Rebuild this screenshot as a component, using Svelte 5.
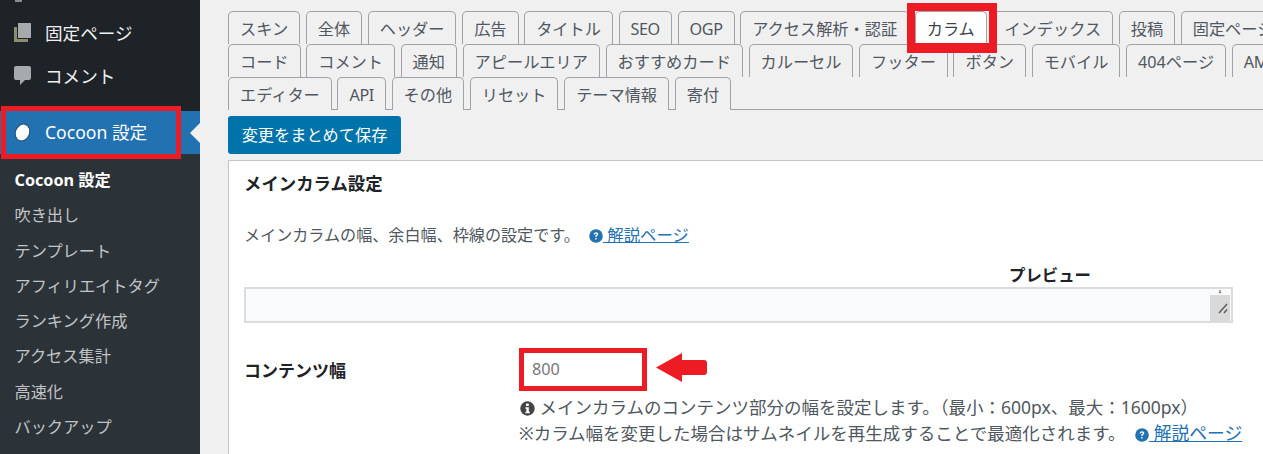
<script lang="ts">
  const tabs = [
    "スキン", "全体", "ヘッダー", "広告", "タイトル", "SEO", "OGP", "アクセス解析・認証", "カラム", "インデックス", "投稿", "固定ページ",
    "コード", "コメント", "通知", "アピールエリア", "おすすめカード", "カルーセル", "フッター", "ボタン", "モバイル", "404ページ", "AMP",
    "エディター", "API", "その他", "リセット", "テーマ情報", "寄付",
  ];
  const activeTab = "カラム";
  const subItems = ["吹き出し", "テンプレート", "アフィリエイトタグ", "ランキング作成", "アクセス集計", "高速化", "バックアップ"];
</script>

<div class="page">
  <aside class="sidebar">
    <div class="sidebar__stub"></div>
    <div class="menu-item">
      <svg class="menu-item__icon" width="17" height="20" viewBox="0 0 17 20">
        <path d="M4 0h13v15H4z" fill="#a7aaad" />
        <path d="M0 4h3v12h11v3H0z" fill="#8c8f6e" />
      </svg>
      <span>固定ページ</span>
    </div>
    <div class="menu-item">
      <svg class="menu-item__icon" width="17" height="20" viewBox="0 0 17 20">
        <path d="M2 0h13a2 2 0 0 1 2 2v10a2 2 0 0 1-2 2h-4l-5 5v-5H2a2 2 0 0 1-2-2V2a2 2 0 0 1 2-2z" fill="#a7aaad" />
      </svg>
      <span>コメント</span>
    </div>
    <div class="menu-item menu-item--current">
      <svg class="menu-item__icon" width="17" height="19" viewBox="0 0 17 19">
        <ellipse cx="8.5" cy="9.5" rx="7" ry="8.6" transform="rotate(22 8.5 9.5)" fill="#fff" stroke="#1d4f78" stroke-width="1" />
      </svg>
      <span>Cocoon 設定</span>
      <i class="menu-item__arrow"></i>
      <i class="mark mark--menu"></i>
    </div>
    <ul class="submenu">
      <li class="submenu__title">Cocoon 設定</li>
      {#each subItems as item}
        <li>{item}</li>
      {/each}
    </ul>
  </aside>

  <main class="main">
    <nav class="tabs">
      {#each tabs as tab}
        <span class="tab" class:tab--active={tab === activeTab} class:tab--latin={/^[A-Z]+$/.test(tab)}>
          {tab}
          {#if tab === activeTab}<i class="mark mark--tab"></i>{/if}
        </span>
      {/each}
    </nav>

    <button class="save" type="button">変更をまとめて保存</button>

    <section class="panel">
      <h2 class="panel__title">メインカラム設定</h2>
      <p class="panel__lead">
        メインカラムの幅、余白幅、枠線の設定です。
        <svg class="help" width="14" height="14" viewBox="0 0 14 14">
          <circle cx="7" cy="7" r="6.8" fill="#2271b1" />
          <path d="M4.8 5.4c0-1.4 1-2.2 2.3-2.2s2.2.8 2.2 1.9c0 1.5-1.8 1.6-1.8 2.9H6.2c0-1.9 1.7-2 1.7-2.9 0-.4-.3-.7-.8-.7s-.9.3-.9 1z" fill="#fff" />
          <rect x="6.2" y="9" width="1.4" height="1.5" fill="#fff" />
        </svg><a href="#help">&nbsp;解説ページ</a>
      </p>

      <div class="preview">
        <div class="preview__label">プレビュー</div>
        <div class="preview__box">
          <div class="scrollbar">
            <svg width="20" height="10" viewBox="0 0 20 10">
              <path d="M10 1.500l2.400 2.800h-4.800zM10 8l2.400-2.800h-4.800z" fill="#666" />
            </svg>
            <div class="scrollbar__thumb">
              <svg width="20" height="21" viewBox="0 0 20 21">
                <path d="M9 18l8-9M14 18l3-3.5" stroke="#555" stroke-width="1.3" fill="none" />
              </svg>
            </div>
          </div>
        </div>
      </div>

      <div class="field">
        <div class="field__label">コンテンツ幅</div>
        <div class="field__body">
          <div class="field__input-row">
            <div class="input">800<i class="mark mark--input"></i></div>
            <svg class="pointer" width="51" height="30" viewBox="0 0 51 30">
              <path d="M0 14.5L26 0v7h22a3 3 0 0 1 3 3v9a3 3 0 0 1-3 3H26v7z" fill="#ed1c24" />
            </svg>
          </div>
          <p class="field__note">
            <svg class="info" width="15" height="15" viewBox="0 0 15 15">
              <circle cx="7.5" cy="7.5" r="7.2" fill="#444" />
              <rect x="6" y="2.6" width="2.8" height="2.4" fill="#fff" />
              <path d="M5.4 6.2h3.4v4.5h1v1.5H5.4v-1.5h1V7.700h-1z" fill="#fff" />
            </svg>
            メインカラムのコンテンツ部分の幅を設定します。（最小：600px、最大：1600px）
          </p>
          <p class="field__note">
            ※カラム幅を変更した場合はサムネイルを再生成することで最適化されます。
            <svg class="help" width="14" height="14" viewBox="0 0 14 14">
              <circle cx="7" cy="7" r="6.8" fill="#2271b1" />
              <path d="M4.8 5.4c0-1.4 1-2.2 2.3-2.2s2.2.8 2.2 1.9c0 1.5-1.8 1.6-1.8 2.9H6.2c0-1.9 1.700-2 1.700-2.9 0-.4-.3-.7-.8-.7s-.9.3-.9 1z" fill="#fff" />
              <rect x="6.2" y="9" width="1.4" height="1.5" fill="#fff" />
            </svg><a href="#help">&nbsp;解説ページ</a>
          </p>
        </div>
      </div>
    </section>
  </main>
</div>

<style>
  :global(body) {
    margin: 0;
    background: #f0f0f1;
    overflow: hidden;
  }

  .page {
    display: flex;
    width: 1263px;
    height: 454px;
    overflow: hidden;
    color: #3c434a;
    font-family: "Noto Sans", "Noto Sans CJK JP", sans-serif;
    font-size: 16px;
    line-height: 1.4;
  }

  .mark {
    position: absolute;
    box-sizing: border-box;
    border: 5px solid #ed1c24;
    pointer-events: none;
  }

  .sidebar {
    flex: none;
    width: 200px;
    height: 454px;
    background: #1d2327;
  }

  .sidebar__stub {
    width: 7px;
    height: 2px;
    margin: 0 0 9.500px 15px;
    background: #8a8d90;
  }

  .menu-item {
    position: relative;
    display: flex;
    align-items: center;
    height: 43px;
    padding-left: 14px;
    color: #f0f0f1;
    font-size: 17.600px;
  }

  .menu-item__icon {
    flex: none;
    width: 17px;
    margin-right: 14px;
  }

  .menu-item--current {
    margin-top: 13.500px;
    background: #2271b1;
    color: #fff;
  }

  .menu-item__arrow {
    position: absolute;
    top: 50%;
    right: 0;
    margin-top: -10px;
    border: 10px solid transparent;
    border-right-color: #f0f0f1;
    border-left-width: 0;
  }

  .mark--menu {
    top: -5px;
    left: 1px;
    width: 180px;
    height: 53px;
  }

  .submenu {
    margin: 0;
    padding: 9px 0 0 15px;
    background: #2c3338;
    color: #c3c4c7;
    font-size: 16.200px;
    list-style: none;
    height: 300px;
  }

  .submenu li {
    height: 35.300px;
    line-height: 35.300px;
    margin-left: -0.500px;
  }

  .submenu .submenu__title {
    color: #fff;
    font-weight: 700;
  }

  .main {
    flex: 1;
    min-width: 0;
    padding: 11px 0 0 28px;
  }

  .tabs {
    display: flex;
    flex-wrap: wrap;
    gap: 0 5.650px;
    width: 1072px;
    border-bottom: 1px solid #a0a2a5;
  }

  .tab {
    position: relative;
    box-sizing: border-box;
    height: 33px;
    margin-bottom: -0.200px;
    padding: 0 11px;
    border: 1px solid #a0a2a5;
    border-bottom: 0;
    border-radius: 5px 5px 0 0;
    background: #f0f0f1;
    color: #50575e;
    font-size: 16.200px;
    line-height: 35px;
    white-space: nowrap;
  }

  .tab--latin {
    letter-spacing: -0.400px;
  }

  .tab--active {
    background: #fff;
    color: #3c434a;
  }

  .mark--tab {
    top: -9px;
    left: -9px;
    width: 90px;
    height: 50px;
    border-width: 8px 8px 10px;
    z-index: 2;
  }

  .save {
    display: block;
    box-sizing: border-box;
    width: 173px;
    height: 38px;
    margin-top: 6px;
    padding: 0;
    border: 0;
    border-radius: 3px;
    background: #0073aa;
    color: #fff;
    font: inherit;
    font-size: 16.200px;
  }

  .panel {
    box-sizing: border-box;
    width: 1100px;
    height: 300px;
    margin-top: 5.500px;
    padding-left: 15px;
    border: 1px solid #c3c4c7;
    background: #fff;
  }

  .panel__title {
    margin: 10px 0 0;
    color: #1d2327;
    font-size: 17.400px;
    font-weight: 700;
    line-height: 24px;
  }

  .panel__lead {
    margin: 28px 0 0;
    color: #50575e;
    font-size: 16.100px;
    line-height: 24px;
  }

  .help {
    vertical-align: -2px;
    margin-left: 5px;
  }

  a {
    color: #2271b1;
    font-size: 16.400px;
  }

  .preview {
    width: 989px;
    margin-top: 16px;
  }

  .preview__label {
    margin-left: 765px;
    color: #1d2327;
    font-size: 16.400px;
    font-weight: 700;
    line-height: 24px;
  }

  .preview__box {
    display: flex;
    justify-content: flex-end;
    box-sizing: border-box;
    height: 36px;
    padding-right: 1px;
    border: 2px solid #dcdcde;
    background: #f9fafb;
  }

  .scrollbar {
    display: flex;
    flex-direction: column;
    width: 20px;
    background: #fafafa;
  }

  .scrollbar__thumb {
    flex: 1;
    background: #d9d9d9;
  }

  .field {
    display: flex;
    margin-top: 25px;
  }

  .field__label {
    flex: none;
    width: 275px;
    padding-top: 11px;
    color: #1d2327;
    font-size: 17px;
    font-weight: 700;
    line-height: 24px;
  }

  .field__input-row {
    display: flex;
    align-items: center;
    gap: 9px;
  }

  .input {
    position: relative;
    box-sizing: border-box;
    width: 128px;
    height: 43px;
    padding-left: 13px;
    color: #777;
    font-size: 16.200px;
    line-height: 43px;
  }

  .mark--input {
    inset: 0;
  }

  .pointer {
    margin-top: -3px;
  }

  .field__note {
    margin: 0;
    color: #50575e;
    font-size: 17.500px;
    line-height: 26px;
    white-space: nowrap;
  }

  .field__note:first-of-type {
    margin-top: 3px;
  }

  .field__note a {
    font-size: 17.800px;
  }

  .info {
    vertical-align: -2px;
    margin-left: 1px;
  }
</style>
